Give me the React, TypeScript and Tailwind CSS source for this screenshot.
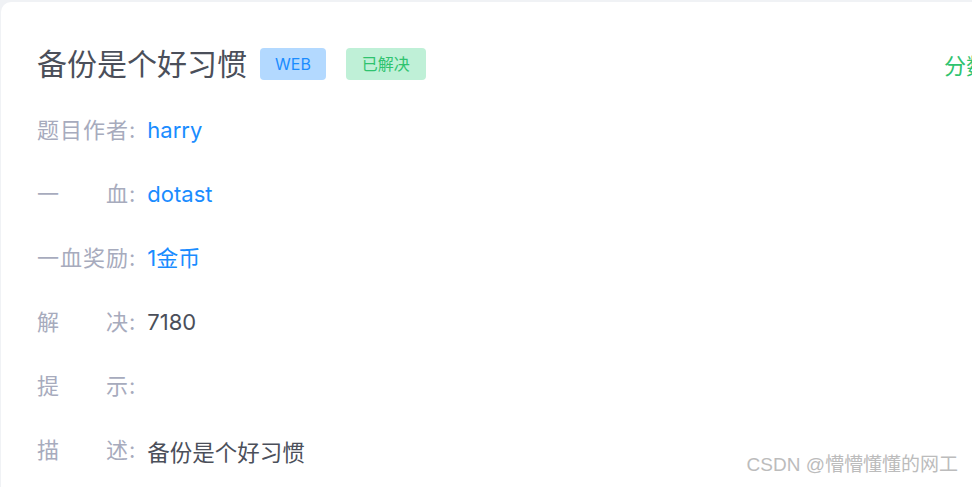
import React from "react";

const cjk = { fontFamily: 'Inter, "Noto Sans CJK SC", sans-serif' };

function Label({ chars }: { chars: string[] }) {
  return (
    <div className="flex items-center text-[22px] text-[#a7abbd] shrink-0">
      <div className="flex w-[91px] justify-between">
        {chars.map((c, i) => (
          <span key={i}>{c}</span>
        ))}
      </div>
      <span className="ml-[1px]">:</span>
    </div>
  );
}

function Row({ chars, children }: { chars: string[]; children?: React.ReactNode }) {
  return (
    <div className="flex items-center h-[64px] gap-[12px]">
      <Label chars={chars} />
      <div className="text-[22px]">{children}</div>
    </div>
  );
}

export default function App() {
  return (
    <div className="relative w-[972px] h-[487px] bg-[#f0f2f5] overflow-hidden" style={cjk}>
      <div className="absolute inset-0 pt-[2px] pl-[1px]">
        <div className="w-full h-full bg-white rounded-tl-[10px] pl-[36px] pt-[30px] overflow-hidden">
          <div className="flex items-center h-[64px] mr-[-16px]">
            <h1 className="text-[30px] text-[#4b4f5a] leading-none">备份是个好习惯</h1>
            <span className="ml-[13px] h-[32px] px-[15px] flex items-center rounded-[4px] bg-[#b3d9ff] text-[#1a8cff] text-[16px]">
              WEB
            </span>
            <span className="ml-[20px] h-[32px] px-[16px] flex items-center rounded-[4px] bg-[#bff0d7] text-[#2fc36f] text-[16px]">
              已解决
            </span>
            <span className="ml-auto shrink-0 text-[22px] text-[#2fc36f] whitespace-nowrap relative top-[2px]">分数</span>
          </div>
          <div className="pt-[2px]">
            <Row chars={["题", "目", "作", "者"]}>
              <span className="text-[#1a8cff]">harry</span>
            </Row>
            <Row chars={["一", "血"]}>
              <span className="text-[#1a8cff]">dotast</span>
            </Row>
            <Row chars={["一", "血", "奖", "励"]}>
              <span className="text-[#1a8cff]">1金币</span>
            </Row>
            <Row chars={["解", "决"]}>
              <span className="text-[#4b4f5a]">7180</span>
            </Row>
            <Row chars={["提", "示"]} />
            <Row chars={["描", "述"]}>
              <span className="text-[#4b4f5a] text-[22.5px] relative top-[3px]">备份是个好习惯</span>
            </Row>
          </div>
        </div>
      </div>
      <div
        className="absolute right-[14px] bottom-[8px] text-[19px] text-[#bcbcbc]"
        style={{ fontFamily: '"Liberation Sans", "Noto Sans CJK SC", sans-serif', textShadow: "0 0 2px #fff" }}
      >
        CSDN @懵懵懂懂的网工
      </div>
    </div>
  );
}
